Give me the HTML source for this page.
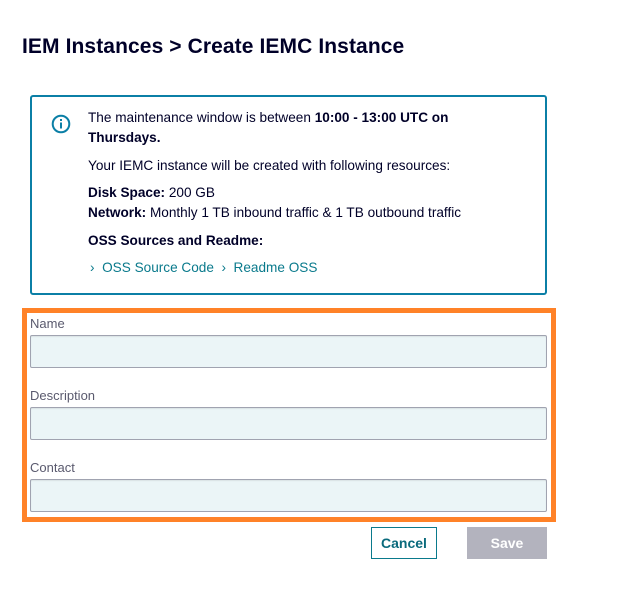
<!DOCTYPE html>
<html><head><meta charset="utf-8"><style>
*{box-sizing:border-box;margin:0;padding:0}
body{width:632px;height:601px;background:#fff;font-family:"Liberation Sans",sans-serif;color:#000028;position:relative;overflow:hidden}
h1{position:absolute;left:22px;top:35px;font-size:21px;font-weight:bold;color:#000028;letter-spacing:0.1px}
.info{position:absolute;left:30px;top:95px;width:517px;height:200px;border:2px solid #0b7fa6;border-radius:3px}
.info svg{position:absolute;left:19px;top:17px}
.t{position:absolute;left:56px;font-size:13.6px;line-height:16px;white-space:nowrap;color:#000028}
b{font-weight:bold}
.lk{color:#0a7a8c}
.frame{position:absolute;left:22px;top:308px;width:534px;height:214px;border:5px solid #ff8228}
.lbl{position:absolute;left:30px;font-size:13px;color:#5a5a6e}
.inp{position:absolute;left:30px;width:517px;height:33px;background:#ebf5f7;border:1px solid #a0a3b0;border-radius:2px;box-shadow:inset 0 1px 1px rgba(0,0,0,.08)}
.btn{position:absolute;top:527px;height:32px;font-size:14px;font-weight:bold;display:flex;align-items:center;justify-content:center}
</style></head><body>
<h1>IEM Instances &gt; Create IEMC Instance</h1>
<div class="info">
<svg width="20" height="20" viewBox="0 0 20 20"><circle cx="10" cy="10" r="8.3" fill="none" stroke="#0b7fa6" stroke-width="2"/><rect x="9" y="8.5" width="2" height="6" fill="#0b7fa6"/><rect x="9" y="5" width="2" height="2" fill="#0b7fa6"/></svg>
<div class="t" style="top:13px">The maintenance window is between <b>10:00 - 13:00 UTC on</b></div>
<div class="t" style="top:33px"><b>Thursdays.</b></div>
<div class="t" style="top:61px">Your IEMC instance will be created with following resources:</div>
<div class="t" style="top:88px"><b>Disk Space:</b> 200 GB</div>
<div class="t" style="top:108px"><b>Network:</b> Monthly 1 TB inbound traffic &amp; 1 TB outbound traffic</div>
<div class="t" style="top:136px"><b>OSS Sources and Readme:</b></div>
<div class="t lk" style="top:163px;left:58px">›&nbsp; OSS Source Code &nbsp;›&nbsp; Readme OSS</div>
</div>
<div class="frame"></div>
<div class="lbl" style="top:316px">Name</div>
<div class="inp" style="top:335px"></div>
<div class="lbl" style="top:388px">Description</div>
<div class="inp" style="top:407px"></div>
<div class="lbl" style="top:460px">Contact</div>
<div class="inp" style="top:479px"></div>
<div class="btn" style="left:371px;width:66px;border:1px solid #0a7a8c;color:#0a6a7c">Cancel</div>
<div class="btn" style="left:467px;width:80px;background:#b3b3be;color:#fff">Save</div>
</body></html>
